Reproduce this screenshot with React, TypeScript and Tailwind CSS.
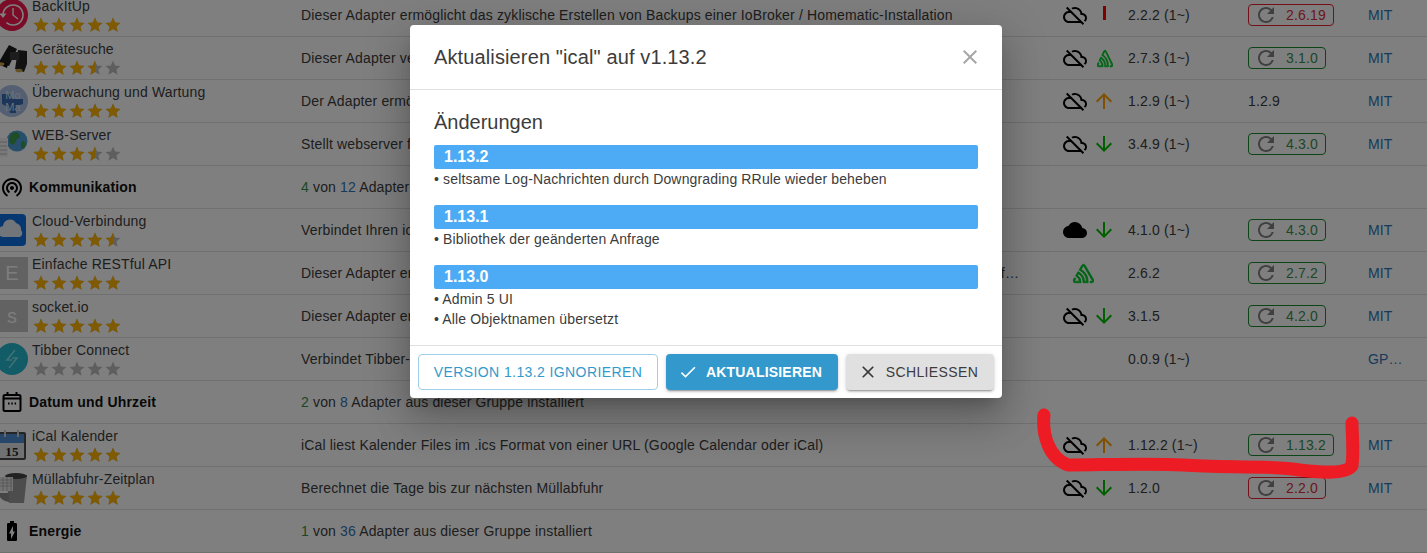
import type { ReactNode } from 'react';
import {
  MdOutlineCloudOff,
  MdCloud,
  MdArrowUpward,
  MdArrowDownward,
  MdRefresh,
  MdCheck,
  MdClose,
  MdStar,
  MdOutlineWifiTethering,
  MdBatteryChargingFull,
} from 'react-icons/md';
import { SiSentry } from 'react-icons/si';

// Bewertung mit halben Sternen
const Stars = ({ value }: { value: number }) => (
  <div className="flex h-[18px]">
    {[0, 1, 2, 3, 4].map((i) => {
      const fill = Math.max(0, Math.min(1, value - i));
      return (
        <span key={i} className="relative block h-[18px] w-[18px] text-[#bdbdbd]">
          <MdStar size={18} />
          {fill > 0 && (
            <span className="absolute left-0 top-0 h-[18px] overflow-hidden text-[#ffb400]" style={{ width: 18 * fill }}>
              <MdStar size={18} />
            </span>
          )}
        </span>
      );
    })}
  </div>
);

const Letter = ({ c }: { c: string }) => (
  <div className="flex h-8 w-8 items-center justify-center bg-[#c4c4c4] text-[20px] text-[#fafafa]">{c}</div>
);

const BackupIcon = () => (
  <svg viewBox="0 0 32 32" className="h-8 w-8">
    <circle cx="16" cy="16" r="16" fill="#f5184f" />
    <path d="M7 16a10 10 0 1 1 3.500 7.600" fill="none" stroke="#fff" strokeWidth="1.600" />
    <path d="M3.500 14.500h7L7 19z" fill="#fff" />
    <path d="M17 9v7l5 4" fill="none" stroke="#fff" strokeWidth="1.400" />
  </svg>
);

const BinocularsIcon = () => (
  <svg viewBox="0 0 32 32" className="h-8 w-8">
    <path d="M13 3l8 4-8 17-10-4z" fill="#1c1c1c" />
    <path d="M22 8l9 1v13l-3 8-9-3z" fill="#242424" />
    <path d="M14 10h9v8h-9z" fill="#3a3a3a" />
    <path d="M3 18l9 4-1 4-9-4z" fill="#0c0c0c" />
    <ellipse cx="5" cy="22" rx="3.500" ry="1.800" fill="#c9a44a" />
    <ellipse cx="23" cy="28.500" rx="3.500" ry="1.800" fill="#c9a44a" />
  </svg>
);

const MomaIcon = () => (
  <svg viewBox="0 0 32 32" className="h-8 w-8">
    <circle cx="16" cy="16" r="16" fill="#a9c0e4" />
    <path d="M6 9h8l2 5h11v5l-7 2v7h-6l-2-6-6-3z" fill="#3a6ab0" />
    <text x="17" y="14" textAnchor="middle" fontSize="11" fill="#d6e2f4" fontFamily="Liberation Sans">Mo</text>
    <text x="17" y="26" textAnchor="middle" fontSize="11" fill="#d6e2f4" fontFamily="Liberation Sans">Ma</text>
  </svg>
);

const WebIcon = () => (
  <svg viewBox="0 0 32 32" className="h-8 w-8">
    <circle cx="21" cy="13" r="10.500" fill="#4f9fd8" />
    <path d="M16 5c5-2 8 0 8 3s-4 2-4 5-4 5-6 2 0-8 2-10zM26 13c3 0 4 2 3 5s-4 3-4 1 0-6 1-6z" fill="#3e9a4e" />
    <path d="M0 10h12v19H0z" fill="#f2f2f2" />
    <path d="M1 14h10M1 18h10M1 22h10M1 26h10" stroke="#bbb" strokeWidth="1" />
  </svg>
);

const CloudIcon = () => (
  <svg viewBox="0 0 32 32" className="h-8 w-8">
    <rect x="0" y="0" width="30" height="32" rx="4" fill="#0d6fe0" />
    <path d="M8 23a5.500 5.500 0 0 1-1-11 7 7 0 0 1 13-3 6.500 6.500 0 0 1 5 7 4.500 4.500 0 0 1-1 7z" fill="#e4eaf4" />
  </svg>
);

const TibberIcon = () => (
  <svg viewBox="0 0 32 32" className="h-8 w-8">
    <circle cx="16" cy="16" r="16" fill="#23b8cc" />
    <path d="M19 7l-8 10h5M13 25l8-10h-5" fill="none" stroke="#7fe0ea" strokeWidth="1.600" />
  </svg>
);

const CalendarPic = () => (
  <svg viewBox="0 0 32 32" className="h-8 w-8">
    <rect x="0" y="3" width="30" height="28" rx="2" fill="#4a4a4a" />
    <rect x="2" y="5" width="26" height="9" fill="#4c8fd4" />
    <rect x="2" y="14" width="26" height="15" fill="#dfe3e6" />
    <rect x="8" y="1" width="2" height="7" fill="#ccc" />
    <rect x="21" y="1" width="2" height="7" fill="#ccc" />
    <text x="16" y="27" textAnchor="middle" fontSize="13" fontWeight="700" fill="#222" fontFamily="Liberation Serif">15</text>
  </svg>
);

const TrashIcon = () => (
  <svg viewBox="0 0 32 32" className="h-8 w-8">
    <path d="M10 3h21l-3 28H13z" fill="#9a9a9a" />
    <ellipse cx="20" cy="4" rx="11" ry="3" fill="#444" />
    <path d="M2 5h15v14H2z" fill="#e6e6e6" />
    <path d="M4 8h12M4 11h12M4 14h12M7 5v14M11 5v14M15 5v14" stroke="#aaa" strokeWidth="0.800" />
    <path d="M3 21c0 5 4 8 10 9v-9z" fill="#8a8a8a" />
  </svg>
);

const CalendarGlyph = () => (
  <svg viewBox="0 0 24 24" className="h-6 w-6" fill="none" stroke="#000" strokeWidth="2">
    <rect x="3.500" y="5" width="17" height="16" rx="1.500" />
    <path d="M7.500 2v4M16.500 2v4M4 8.500h16" />
    <path d="M8 13.500h1.500M11.300 13.500h1.500M14.600 13.500h1.500" />
  </svg>
);

type Adapter = {
  pic: ReactNode;
  name: string;
  rating: number;
  desc: string;
  cloud?: 'off' | 'on';
  state?: 'up' | 'down' | 'sentry' | 'bar';
  sentryOnly?: boolean;
  installed: string;
  update?: { v: string; tone: 'red' | 'green' };
  plain?: string;
  license: string;
};

const Row = ({ a }: { a: Adapter }) => (
  <div className="flex h-[43px] items-center border-b border-[#e0e0e0] text-[14px] tracking-[0.15px]">
    <div className="-ml-1 w-9 shrink-0">{a.pic}</div>
    <div className="w-[269px] shrink-0 pt-[1px]">
      <div className="h-[18px] leading-[17px] text-[#3c3c3c]">{a.name}</div>
      <Stars value={a.rating} />
    </div>
    <div className="w-[762px] shrink-0 whitespace-nowrap text-[#3c3c3c]">{a.desc}</div>
    <div className="flex w-[65px] shrink-0 items-center">
      {a.sentryOnly ? (
        <SiSentry size={21} stroke="currentColor" strokeWidth={0.8} className="ml-[10px] text-[#00c828]" />
      ) : (
        <>
          <span className="block h-6 w-[29px] shrink-0">
            {a.cloud === 'off' && <MdOutlineCloudOff size={24} className="text-black" />}
            {a.cloud === 'on' && <MdCloud size={24} className="text-black" />}
          </span>
          {a.state === 'up' && <MdArrowUpward size={24} className="text-[#ffa000]" />}
          {a.state === 'down' && <MdArrowDownward size={24} className="text-[#00c000]" />}
          {a.state === 'sentry' && (
            <SiSentry
              preserveAspectRatio="none"
              stroke="currentColor"
              strokeWidth={0.8}
              className="ml-[5px] h-[19px] w-4 text-[#00c828]"
            />
          )}
          {a.state === 'bar' && <span className="mb-[4px] ml-[11px] block h-[14px] w-[3px] bg-[#ff0000]" />}
        </>
      )}
    </div>
    <div className="w-[120px] shrink-0 text-[#3c3c3c]">{a.installed}</div>
    <div className="w-[120px] shrink-0">
      {a.update ? (
        a.update.tone === 'red' ? (
          <span className="inline-flex h-[22px] items-center gap-[8px] rounded border border-[#e82030] pl-[5px] pr-[7px] align-middle text-[#d83040]">
            <MdRefresh size={24} className="text-[#808080]" />
            {a.update.v}
          </span>
        ) : (
          <span className="inline-flex h-[22px] items-center gap-[8px] rounded border border-[#1b8a2e] pl-[5px] pr-[7px] align-middle text-[#3a9050]">
            <MdRefresh size={24} className="text-[#808080]" />
            {a.update.v}
          </span>
        )
      ) : (
        <span className="text-[#3c3c3c]">{a.plain}</span>
      )}
    </div>
    <div className="w-[36px] shrink-0 whitespace-nowrap text-[#2f74b5]">{a.license}</div>
  </div>
);

const Group = ({ icon, name, installed, total }: { icon: ReactNode; name: string; installed: number; total: number }) => (
  <div className="flex h-[43px] items-center border-b border-[#e0e0e0] text-[14px] tracking-[0.15px]">
    <div className="w-[29px] shrink-0">{icon}</div>
    <div className="w-[272px] shrink-0 font-bold text-[#111]">{name}</div>
    <div className="text-[#3c3c3c]">
      <span className="text-[#3a9050]">{installed}</span> von <span className="text-[#2f74b5]">{total}</span> Adapter aus
      dieser Gruppe installiert
    </div>
  </div>
);

const Changes = ({ v, lines }: { v: string; lines: string[] }) => (
  <div className="mb-[16px]">
    <div className="h-6 rounded-[2px] bg-[#4dabf5] pl-[10px] text-[16px] font-bold leading-6 text-white">{v}</div>
    {lines.map((l) => (
      <div key={l} className="h-5 text-[14px] leading-5 tracking-[0.15px] text-[#3c3c3c]">
        • {l}
      </div>
    ))}
  </div>
);

const Dialog = () => (
  <div className="absolute left-[410px] top-[25px] w-[592px] rounded bg-white shadow-[0_11px_15px_-7px_rgba(0,0,0,0.2),0_24px_38px_3px_rgba(0,0,0,0.14),0_9px_46px_8px_rgba(0,0,0,0.12)]">
    <div className="flex h-[65px] items-center justify-between border-b border-[#e0e0e0] pl-[24px] pr-[20px]">
      <div className="text-[20px] tracking-[0.125px] text-[#3c3c3c]">Aktualisieren "ical" auf v1.13.2</div>
      <MdClose size={24} className="text-[#a6a6a6]" />
    </div>
    <div className="h-[256px] border-b border-[#e0e0e0] pl-[24px] pr-[24px] pt-[19px]">
      <div className="mb-[10px] h-[26px] text-[20px] leading-[26px] text-[#3c3c3c]">Änderungen</div>
      <Changes v="1.13.2" lines={['seltsame Log-Nachrichten durch Downgrading RRule wieder beheben']} />
      <Changes v="1.13.1" lines={['Bibliothek der geänderten Anfrage']} />
      <Changes v="1.13.0" lines={['Admin 5 UI', 'Alle Objektnamen übersetzt']} />
    </div>
    <div className="flex h-[52px] items-center gap-[8px] pl-[8px] pr-[8px]">
      <div className="flex h-[36px] w-[240px] items-center justify-center rounded border border-[#9fd0e8] text-[14px] tracking-[0.4px] text-[#3399cc]">
        VERSION 1.13.2 IGNORIEREN
      </div>
      <div className="flex h-[36px] w-[172px] items-center justify-center gap-[8px] rounded bg-[#3399cc] pr-[4px] text-[14px] font-bold tracking-[0.2px] text-white shadow-[0_3px_1px_-2px_rgba(0,0,0,0.2),0_2px_2px_0_rgba(0,0,0,0.14),0_1px_5px_0_rgba(0,0,0,0.12)]">
        <MdCheck size={20} />
        AKTUALISIEREN
      </div>
      <div className="flex h-[36px] w-[148px] items-center justify-center gap-[8px] rounded bg-[#e0e0e0] pr-[4px] text-[14px] tracking-[0.4px] text-[#3c3c3c] shadow-[0_3px_1px_-2px_rgba(0,0,0,0.2),0_2px_2px_0_rgba(0,0,0,0.14),0_1px_5px_0_rgba(0,0,0,0.12)]">
        <MdClose size={20} />
        SCHLIESSEN
      </div>
    </div>
  </div>
);

const top: Adapter[] = [
  { pic: <BackupIcon />, name: 'BackItUp', rating: 5, desc: 'Dieser Adapter ermöglicht das zyklische Erstellen von Backups einer IoBroker / Homematic-Installation', cloud: 'off', state: 'bar', installed: '2.2.2 (1~)', update: { v: '2.6.19', tone: 'red' }, license: 'MIT' },
  { pic: <BinocularsIcon />, name: 'Gerätesuche', rating: 3.5, desc: 'Dieser Adapter versucht Geräte im Netzwerk zu finden', cloud: 'off', state: 'sentry', installed: '2.7.3 (1~)', update: { v: '3.1.0', tone: 'green' }, license: 'MIT' },
  { pic: <MomaIcon />, name: 'Überwachung und Wartung', rating: 5, desc: 'Der Adapter ermöglicht die Überwachung und Wartung', cloud: 'off', state: 'up', installed: '1.2.9 (1~)', plain: '1.2.9', license: 'MIT' },
  { pic: <WebIcon />, name: 'WEB-Server', rating: 3.5, desc: 'Stellt webserver für ioBroker bereit', cloud: 'off', state: 'down', installed: '3.4.9 (1~)', update: { v: '4.3.0', tone: 'green' }, license: 'MIT' },
];

const comm: Adapter[] = [
  { pic: <CloudIcon />, name: 'Cloud-Verbindung', rating: 4.5, desc: 'Verbindet Ihren ioBroker mit der Cloud', cloud: 'on', state: 'down', installed: '4.1.0 (1~)', update: { v: '4.3.0', tone: 'green' }, license: 'MIT' },
  { pic: <Letter c="E" />, name: 'Einfache RESTful API', rating: 5, desc: 'Dieser Adapter ermöglicht den Zugriff auf Objekte und Zustände von ioBroker über eine einfache RESTful API f…', sentryOnly: true, installed: '2.6.2', update: { v: '2.7.2', tone: 'green' }, license: 'MIT' },
  { pic: <Letter c="s" />, name: 'socket.io', rating: 5, desc: 'Dieser Adapter ermöglicht den Zugriff über socket.io', cloud: 'off', state: 'down', installed: '3.1.5', update: { v: '4.2.0', tone: 'green' }, license: 'MIT' },
  { pic: <TibberIcon />, name: 'Tibber Connect', rating: 0, desc: 'Verbindet Tibber-Daten mit ioBroker', installed: '0.0.9 (1~)', license: 'GP…' },
];

const dates: Adapter[] = [
  { pic: <CalendarPic />, name: 'iCal Kalender', rating: 5, desc: 'iCal liest Kalender Files im .ics Format von einer URL (Google Calendar oder iCal)', cloud: 'off', state: 'up', installed: '1.12.2 (1~)', update: { v: '1.13.2', tone: 'green' }, license: 'MIT' },
  { pic: <TrashIcon />, name: 'Müllabfuhr-Zeitplan', rating: 5, desc: 'Berechnet die Tage bis zur nächsten Müllabfuhr', cloud: 'off', state: 'down', installed: '1.2.0', update: { v: '2.2.0', tone: 'red' }, license: 'MIT' },
];

export default function App() {
  return (
    <div className="relative h-[553px] w-[1427px] overflow-hidden bg-white font-['Liberation_Sans',Arial,sans-serif]">
      <div className="-mt-[6px]">
        {top.map((a) => (
          <Row key={a.name} a={a} />
        ))}
        <Group icon={<MdOutlineWifiTethering size={24} className="text-black" />} name="Kommunikation" installed={4} total={12} />
        {comm.map((a) => (
          <Row key={a.name} a={a} />
        ))}
        <Group icon={<CalendarGlyph />} name="Datum und Uhrzeit" installed={2} total={8} />
        {dates.map((a) => (
          <Row key={a.name} a={a} />
        ))}
        <Group icon={<MdBatteryChargingFull size={24} className="text-black" />} name="Energie" installed={1} total={36} />
      </div>
      {/* Abdunklung hinter dem Dialog */}
      <div className="absolute inset-0 bg-black/50" />
      <Dialog />
      {/* rote Markierung aus dem Screenshot */}
      <svg className="pointer-events-none absolute left-0 top-0 h-[553px] w-[1427px]">
        <path
          d="M1044 415C1042 435 1049 458 1068 465C1100 465 1150 463 1183 465C1220 468 1270 465 1300 470C1325 473 1345 474 1352 466C1354 450 1352 435 1352 423"
          fill="none"
          stroke="#ed1c24"
          strokeWidth="13"
          strokeLinecap="round"
          strokeLinejoin="round"
        />
      </svg>
    </div>
  );
}
